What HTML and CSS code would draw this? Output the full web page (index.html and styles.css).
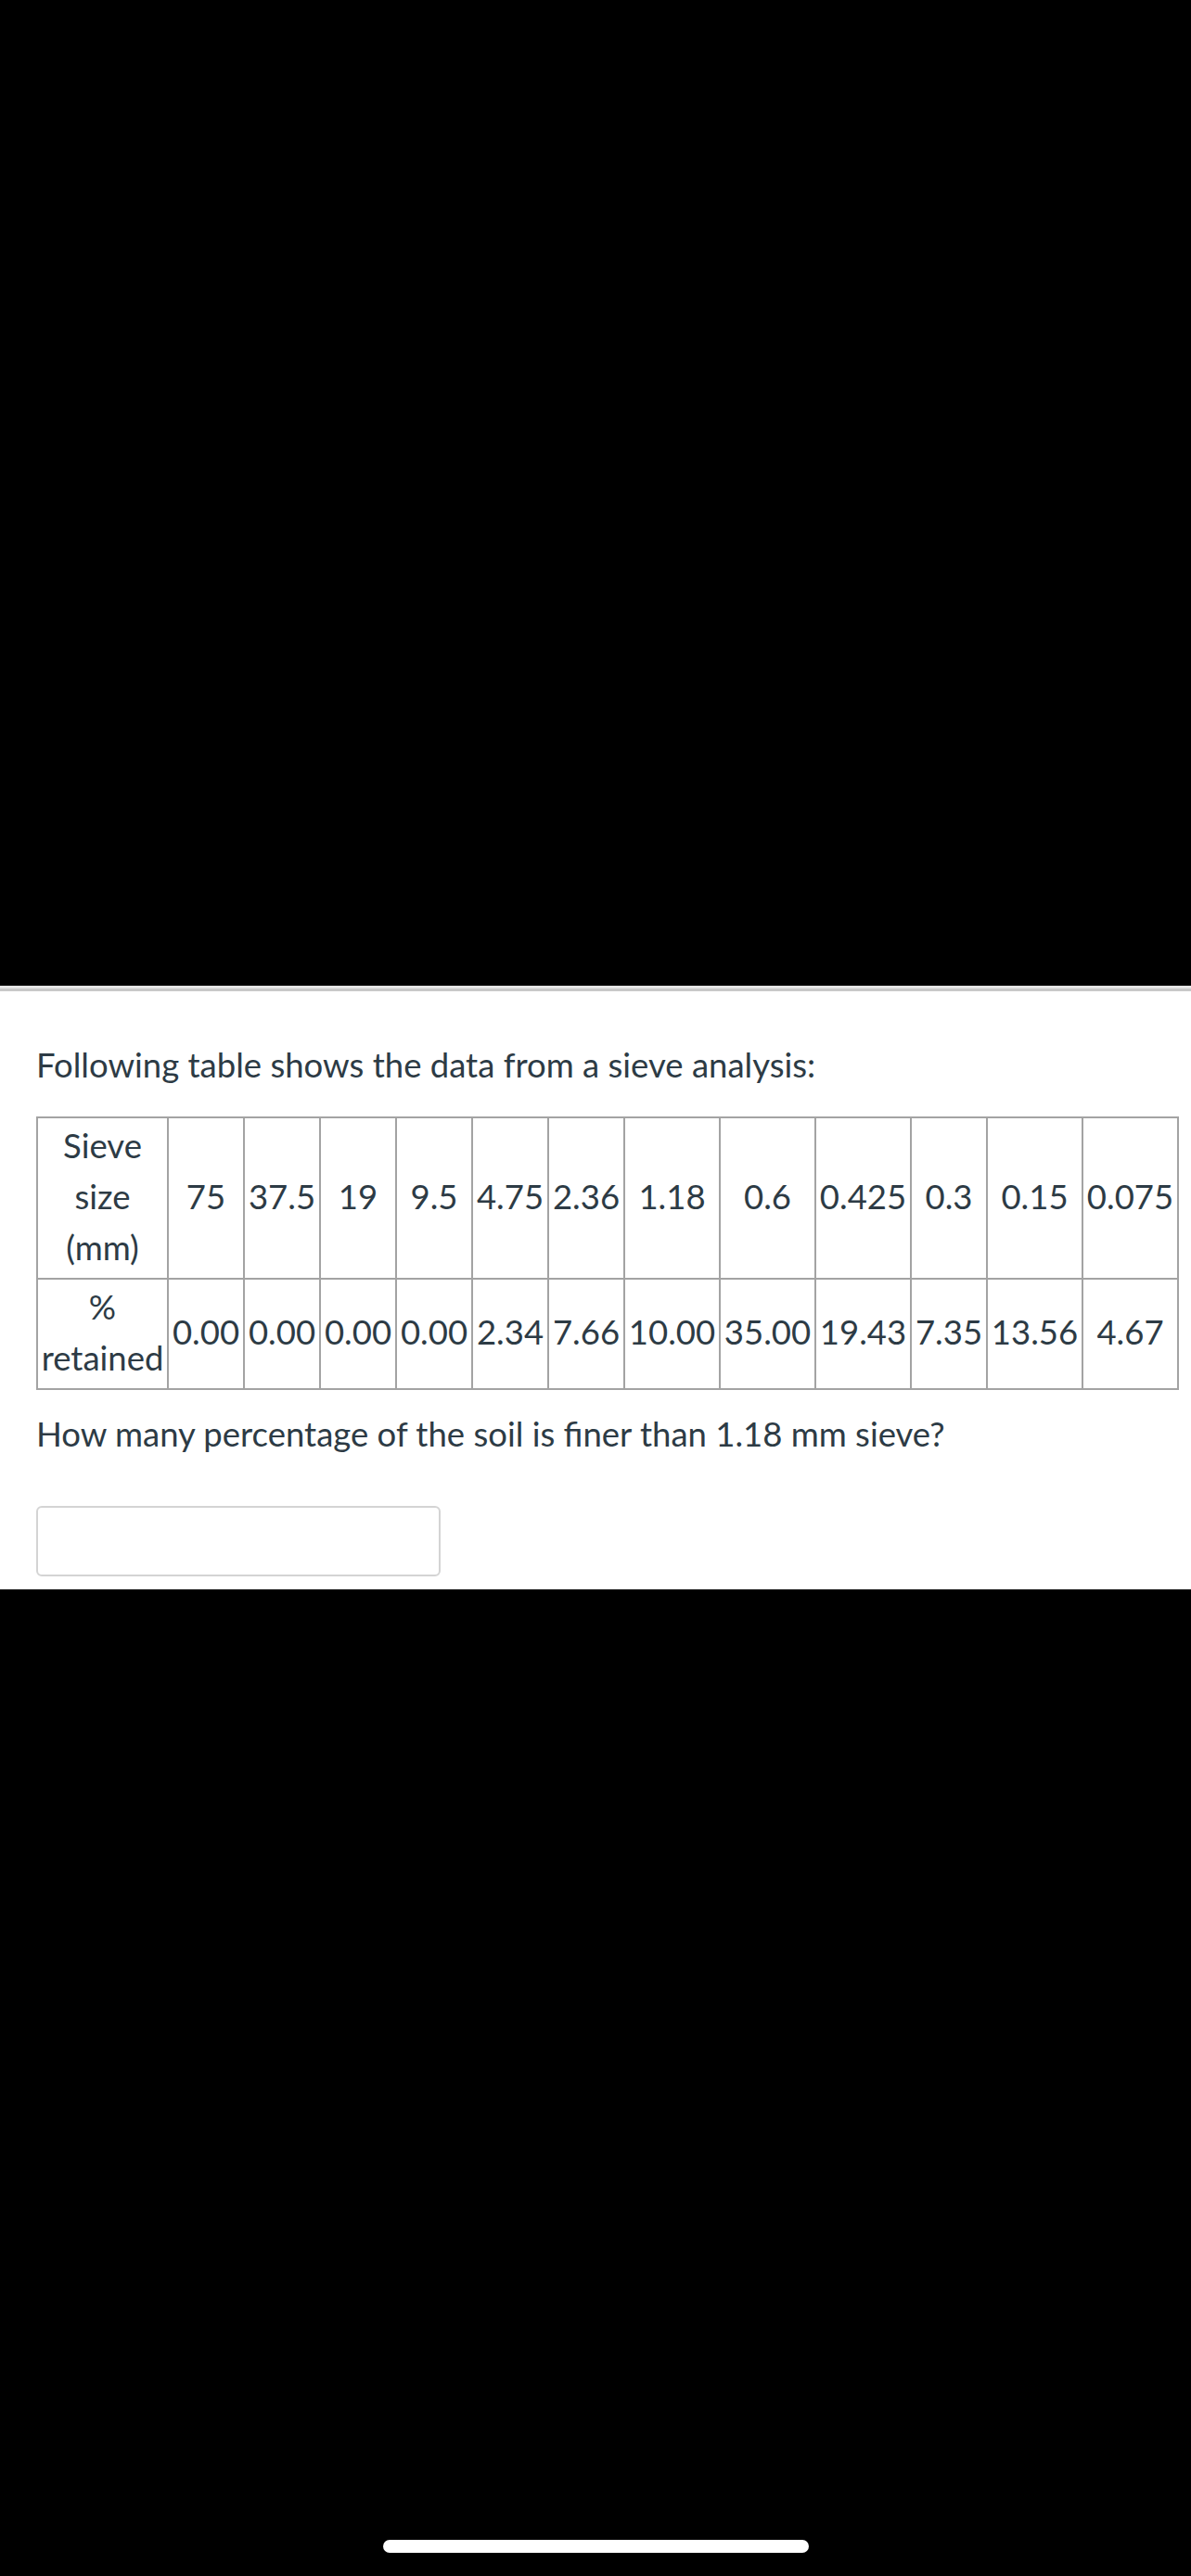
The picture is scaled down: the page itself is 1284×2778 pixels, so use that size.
FILE: index.html
```html
<!DOCTYPE html>
<html lang="en">
<head>
<meta charset="utf-8">
<title>Sieve analysis</title>
<link rel="stylesheet" href="styles.css">
</head>
<body>
<div class="screen">
  <div class="top-black"></div>
  <div class="divider"></div>
  <main class="content">
    <p class="intro">Following table shows the data from a sieve analysis:</p>
    <table class="sieve">
      <colgroup>
        <col class="c-head">
        <col class="c-s"><col class="c-s"><col class="c-s"><col class="c-s"><col class="c-s"><col class="c-s">
        <col class="c-l"><col class="c-l"><col class="c-l"><col class="c-s"><col class="c-l"><col class="c-l">
      </colgroup>
      <tr class="r1">
        <td>Sieve<br>size<br>(mm)</td>
        <td>75</td><td>37.5</td><td>19</td><td>9.5</td><td>4.75</td><td>2.36</td>
        <td>1.18</td><td>0.6</td><td>0.425</td><td>0.3</td><td>0.15</td><td>0.075</td>
      </tr>
      <tr class="r2">
        <td>%<br>retained</td>
        <td>0.00</td><td>0.00</td><td>0.00</td><td>0.00</td><td>2.34</td><td>7.66</td>
        <td>10.00</td><td>35.00</td><td>19.43</td><td>7.35</td><td>13.56</td><td>4.67</td>
      </tr>
    </table>
    <p class="question">How many percentage of the soil is finer than 1.18 mm sieve?</p>
    <div class="answer"></div>
  </main>
  <div class="bottom-black">
    <div class="home-bar"></div>
  </div>
</div>
</body>
</html>
```
FILE: styles.css
```css
html, body {
  margin: 0;
  padding: 0;
  background: #000;
}
.screen {
  width: 1284px;
  height: 2778px;
  display: flex;
  flex-direction: column;
  font-family: Lato, "Open Sans", sans-serif;
  color: #2d3b45;
}
.top-black {
  height: 1063px;
  background: #000;
}
.divider {
  height: 3px;
  background: #e6e6e6;
  border-bottom: 3px solid #c8c8c8;
}
.content {
  background: #fff;
  height: 645px;
  padding: 57px 0 0 39px;
  box-sizing: border-box;
}
.intro {
  margin: 0 0 33px 0;
  font-size: 36.5px;
  line-height: 45px;
}
.sieve {
  border-collapse: collapse;
  table-layout: fixed;
  width: 1230px;
  font-size: 36.5px;
  line-height: 55px;
}
.c-head { width: 141px; }
.c-s { width: 82px; }
.c-l { width: 103px; }
.sieve td {
  border: 2px solid #a3a3a3;
  text-align: center;
  padding: 0 0 4px 0;
  white-space: nowrap;
}
.r1 td { height: 168px; }
.r2 td { height: 113px; }
.question {
  margin: 25px 0 0 0;
  font-size: 36.5px;
  line-height: 45px;
}
.answer {
  margin-top: 55px;
  width: 436px;
  height: 76px;
  box-sizing: border-box;
  border: 2px solid #d4d4d4;
  border-radius: 6px;
  background: #fff;
}
.bottom-black {
  flex: 1;
  background: #000;
  display: flex;
  justify-content: center;
  align-items: flex-end;
}
.home-bar {
  width: 459px;
  height: 14px;
  border-radius: 7px;
  background: #fff;
  margin-bottom: 25px;
}
```
